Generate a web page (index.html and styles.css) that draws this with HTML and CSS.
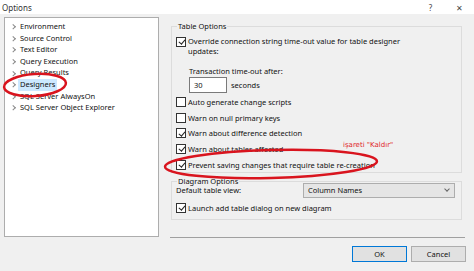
FILE: index.html
```html
<!DOCTYPE html>
<html>
<head>
  <title>Options</title>
  <link rel="stylesheet" href="styles.css">
</head>
<body>

<div class="window">
  <div class="titlebar">
    <span class="title">Options</span>
    <span class="tb-btn">?</span>
    <span class="tb-btn close">✕</span>
  </div>

  <div class="main">
    <div class="tree">
      <div class="node"><span class="chev"></span>Environment</div>
      <div class="node"><span class="chev"></span>Source Control</div>
      <div class="node"><span class="chev"></span>Text Editor</div>
      <div class="node"><span class="chev"></span>Query Execution</div>
      <div class="node"><span class="chev"></span>Query Results</div>
      <div class="node"><span class="chev"></span><span class="sel">Designers</span></div>
      <div class="node"><span class="chev"></span>SQL Server AlwaysOn</div>
      <div class="node"><span class="chev"></span>SQL Server Object Explorer</div>
    </div>

    <div class="pane">
      <fieldset class="group table-opts">
        <legend>Table Options</legend>
        <div class="row wrap"><span class="cb on"></span><span>Override connection string time-out value for table designer<br>updates:</span></div>
        <div class="sub">
          <div class="label">Transaction time-out after:</div>
          <div class="timeout"><span class="textbox">30</span><span>seconds</span></div>
        </div>
        <div class="row first"><span class="cb"></span>Auto generate change scripts</div>
        <div class="row"><span class="cb"></span>Warn on null primary keys</div>
        <div class="row"><span class="cb on"></span>Warn about difference detection</div>
        <div class="row"><span class="cb on"></span>Warn about tables affected</div>
        <div class="row"><span class="cb on"></span>Prevent saving changes that require table re-creation</div>
      </fieldset>

      <fieldset class="group diagram-opts">
        <legend>Diagram Options</legend>
        <div class="view-row">
          <span>Default table view:</span>
          <span class="combo">Column Names<span class="arrow"></span></span>
        </div>
        <div class="row"><span class="cb on"></span>Launch add table dialog on new diagram</div>
      </fieldset>

      <div class="sep"></div>

      <div class="buttons">
        <span class="btn default">OK</span>
        <span class="btn">Cancel</span>
      </div>
    </div>
  </div>

  <svg class="marks" width="474" height="271" viewBox="0 0 474 271">
    <ellipse cx="35" cy="85" rx="31" ry="11" transform="rotate(-4 35 85)" />
    <ellipse cx="271" cy="164" rx="106" ry="14" transform="rotate(-1.5 271 164)" />
  </svg>
  <div class="note">işareti "Kaldır"</div>
</div>

</body>
</html>
```

FILE: styles.css
```css
body { margin: 0; background: #f0f0f0; font-family: "Noto Sans", "Open Sans", sans-serif; font-size: 7.5px; color: #111; }
.window { position: relative; width: 474px; height: 271px; overflow: hidden; }

.titlebar { height: 14px; background: #fff; display: flex; align-items: center; padding: 0 0 0 2px; font-size: 8px; color: #333; }
.title { flex: 1; }
.tb-btn { width: 29px; text-align: center; color: #444; }
.close { font-size: 8px; }

.main { display: flex; align-items: flex-start; padding: 3px 0 0 4px; }

.tree { width: 153px; height: 215px; background: #fff; border: 1px solid #adadad; padding-top: 3px; }
.node { height: 11.6px; line-height: 11.6px; display: flex; align-items: center; white-space: nowrap; }
.chev { width: 4px; height: 5px; margin: 0 5px 0 6px; position: relative; }
.chev::before { content: ""; position: absolute; left: 0; top: 1px; width: 2.5px; height: 2.5px; border-right: 1px solid #8a8a8a; border-bottom: 1px solid #8a8a8a; transform: rotate(-45deg); }
.sel { background: #cce8ff; padding: 0 2px; margin-left: -2px; }

.pane { width: 296px; height: 241px; margin-left: 11px; padding-top: 4px; display: flex; flex-direction: column; }

.group { border: 1px solid #dcdcdc; margin: 0 4px 0 1px; padding: 0 0 1px 4px; }
.group legend { padding: 0 1px; margin-left: 1px; }
.table-opts { padding-top: 5px; padding-bottom: 0; }
.diagram-opts { margin-top: 3px; }

.row { display: flex; align-items: center; height: 15.7px; white-space: nowrap; }
.row.wrap { align-items: flex-start; height: auto; line-height: 10px; padding-bottom: 9px; }
.row.wrap .cb { margin-top: 0.5px; }
.row.first { margin-top: 1px; }
.cb { width: 8px; height: 8px; border: 1px solid #333; background: #fff; margin-right: 2px; flex: none; position: relative; }
.cb.on::after { content: ""; position: absolute; left: 2.5px; top: 0.5px; width: 2.5px; height: 5px; border-right: 1px solid #222; border-bottom: 1px solid #222; transform: rotate(40deg); }

.sub { padding-left: 13px; }
.label { height: 12px; line-height: 12px; }
.timeout { display: flex; align-items: center; gap: 4px; height: 16px; }
.textbox { width: 32px; height: 14px; line-height: 14px; border: 1px solid #7a7a7a; background: #fff; padding-left: 4px; }

.view-row { display: flex; align-items: center; justify-content: space-between; height: 14px; padding-right: 6px; margin-top: -3px; }
.combo { width: 146px; height: 13px; line-height: 13px; border: 1px solid #adadad; background: #e5e5e5; padding-left: 4px; position: relative; }
.arrow { position: absolute; right: 5px; top: 3px; width: 3px; height: 3px; border-right: 1px solid #666; border-bottom: 1px solid #666; transform: rotate(45deg); }
.diagram-opts .row { height: 21px; }

.sep { height: 1px; flex: none; background: #a0a0a0; margin-top: auto; width: 295px; }

.buttons { display: flex; justify-content: flex-end; gap: 4px; margin-top: 8px; }
.btn { width: 53px; height: 14px; line-height: 14px; text-align: center; background: #e1e1e1; border: 1px solid #adadad; }
.btn.default { border-color: #0078d7; }

.marks { position: absolute; left: 0; top: 0; pointer-events: none; }
.marks ellipse { fill: none; stroke: #d9141e; stroke-width: 2.5; }
.note { position: absolute; left: 343px; top: 141px; color: #e0252a; font-family: "DejaVu Sans", sans-serif; font-size: 7px; }
```
